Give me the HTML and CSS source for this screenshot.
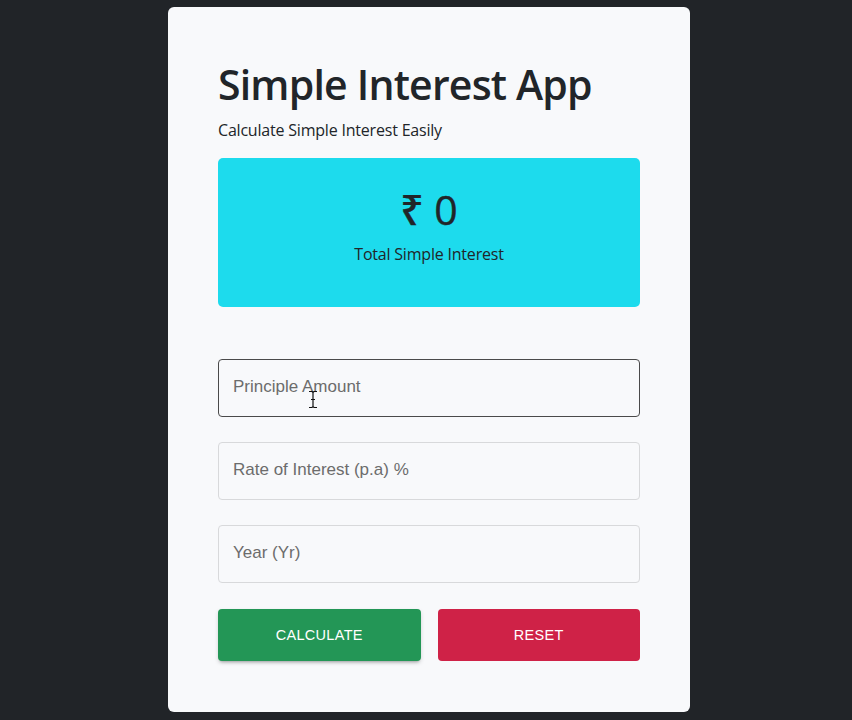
FILE: index.html
```
<!DOCTYPE html>
<html>
<head>
<meta charset="utf-8">
<link rel="stylesheet" href="styles.css">
</head>
<body>
<div class="page">
  <div class="card">
    <h1 class="title">Simple Interest App</h1>
    <p class="subtitle">Calculate Simple Interest Easily</p>
    <div class="result">
      <div class="amount">₹ 0</div>
      <div class="label">Total Simple Interest</div>
    </div>
    <form class="form">
      <div class="field focused"><span class="ph">Principle Amount</span>
        <svg class="cursor" width="10" height="19" viewBox="0 0 10 19"><path d="M1 1.5h3l1 1 1-1h3M5 2.5v14M1 17.5h3l1-1 1 1h3M3 9.5h4" fill="none" stroke="#111" stroke-width="1.2"/></svg>
      </div>
      <div class="field"><span class="ph">Rate of Interest (p.a) %</span></div>
      <div class="field"><span class="ph">Year (Yr)</span></div>
      <div class="buttons">
        <button type="button" class="btn calc">CALCULATE</button>
        <button type="button" class="btn reset">RESET</button>
      </div>
    </form>
  </div>
</div>
</body>
</html>
```
FILE: styles.css
```
html, body {
  margin: 0;
  padding: 0;
  background: #212428;
}
.page {
  display: flex;
  justify-content: center;
  padding-top: 7px;
  padding-left: 6px;
  height: 720px;
  box-sizing: border-box;
}
.card {
  width: 522px;
  height: 705px;
  box-sizing: border-box;
  background: #f8f9fb;
  border-radius: 6px;
  padding: 55px 50px 0 50px;
  font-family: "Open Sans", "Noto Sans", sans-serif;
  color: #212529;
}
.title {
  margin: 0;
  font-size: 41px;
  font-weight: 600;
  line-height: 44px;
  letter-spacing: -0.8px;
}
.subtitle {
  margin: 12px 0 0 0;
  font-size: 16px;
  line-height: 24px;
  letter-spacing: -0.2px;
}
.result {
  margin-top: 16px;
  height: 149px;
  background: #1ddbed;
  border-radius: 5px;
  display: flex;
  flex-direction: column;
  align-items: center;
  padding-top: 25px;
  box-sizing: border-box;
}
.amount {
  font-size: 41px;
  line-height: 52px;
  font-weight: 500;
  -webkit-text-stroke: 0.4px #212529;
}
.label {
  margin-top: 9px;
  font-size: 16px;
  line-height: 20px;
  letter-spacing: -0.2px;
}
.form {
  margin-top: 52px;
  display: flex;
  flex-direction: column;
  gap: 25px;
}
.field {
  position: relative;
  height: 58px;
  box-sizing: border-box;
  border: 1px solid #d8d9db;
  border-radius: 4px;
  display: flex;
  align-items: center;
  padding-left: 14px;
  padding-bottom: 2px;
}
.field.focused {
  border-color: #4a4a4a;
}
.cursor {
  position: absolute;
  left: 89px;
  top: 30px;
}
.ph {
  font-family: "Liberation Sans", Arial, sans-serif;
  font-size: 17px;
  color: #6c6c6c;
}
.buttons {
  display: flex;
  gap: 17px;
  margin-top: 1px;
}
.btn {
  flex: 1;
  height: 52px;
  border: none;
  border-radius: 4px;
  color: #fff;
  font-family: "Liberation Sans", Arial, sans-serif;
  font-size: 14.5px;
  letter-spacing: 0.3px;
}
.calc {
  background: #239656;
  box-shadow: 0 3px 3px -2px rgba(0,0,0,0.25), 0 2px 4px rgba(0,0,0,0.14);
}
.reset {
  background: #cf2247;
}
```
